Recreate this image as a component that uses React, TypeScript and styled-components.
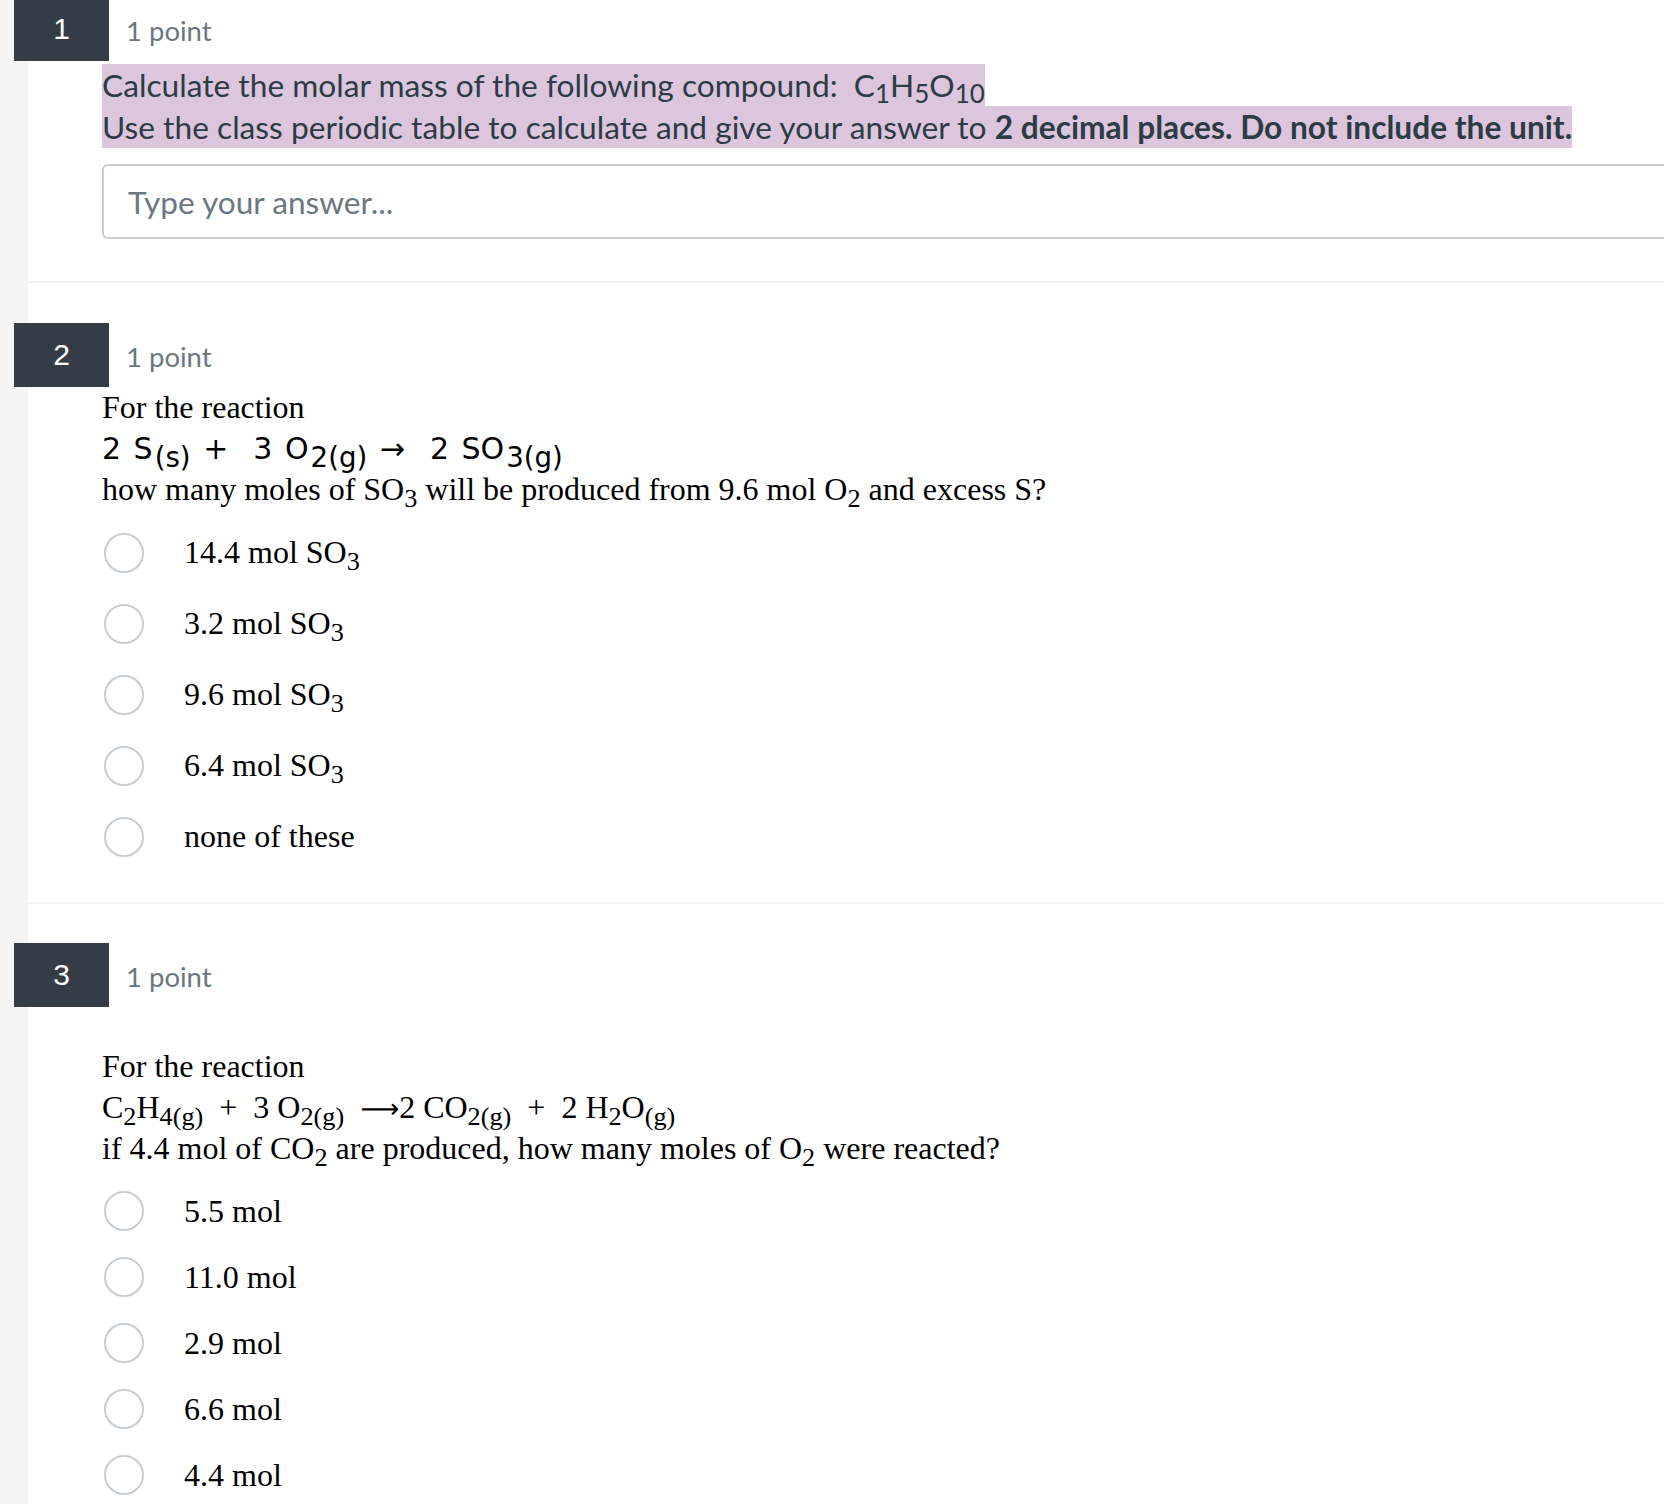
import styled, { createGlobalStyle } from "styled-components";

const GlobalStyle = createGlobalStyle`
  body {
    margin: 0;
    background: #fff;
    font-family: Lato, "Noto Sans", sans-serif;
  }
`;

const q2Options = ["14.4", "3.2", "9.6", "6.4"];
const q3Options = ["5.5 mol", "11.0 mol", "2.9 mol", "6.6 mol", "4.4 mol"];

const App = () => {
  return (
    <Page>
      <GlobalStyle />
      <Rail />
      <Main>
        <Question $top={-3} $bottom={42}>
          <Header>
            <Badge>1</Badge>
            <Points>1 point</Points>
          </Header>
          <Body>
            <Prompt>
              <Highlight>
                Calculate the molar mass of the following compound:&nbsp; C
                <Sub>1</Sub>H<Sub>5</Sub>O<Sub>10</Sub>
              </Highlight>
              <Highlight>
                Use the class periodic table to calculate and give your answer to{" "}
                <b>2 decimal places. Do not include the unit.</b>
              </Highlight>
            </Prompt>
            <Answer placeholder="Type your answer..." />
          </Body>
        </Question>

        <Question $top={40} $bottom={30}>
          <Header>
            <Badge>2</Badge>
            <Points>1 point</Points>
          </Header>
          <Body>
            <Serif>
              <div>For the reaction</div>
              <Equation>
                2 S<ESub>(s)</ESub> +&nbsp; 3 O<ESub>2(g)</ESub> &rarr;&nbsp; 2 SO
                <ESub>3(g)</ESub>
              </Equation>
              <div>
                how many moles of SO<Sub>3</Sub> will be produced from 9.6 mol O
                <Sub>2</Sub> and excess S?
              </div>
            </Serif>
            <Options $row={71} $gap={7}>
              {q2Options.map((o) => (
                <Option key={o}>
                  <Radio />
                  <Label>
                    {o} mol SO<Sub>3</Sub>
                  </Label>
                </Option>
              ))}
              <Option>
                <Radio />
                <Label>none of these</Label>
              </Option>
            </Options>
          </Body>
        </Question>

        <Question $top={39} $bottom={40}>
          <Header>
            <Badge>3</Badge>
            <Points>1 point</Points>
          </Header>
          <Body>
            <Serif>
              <Blank />
              <div>For the reaction</div>
              <div>
                C<Sub>2</Sub>H<Sub>4(g)</Sub>&nbsp; +&nbsp; 3 O<Sub>2(g)</Sub>
                &nbsp; <Arrow>&#10230;</Arrow>2 CO<Sub>2(g)</Sub>&nbsp; +&nbsp; 2 H
                <Sub>2</Sub>O<Sub>(g)</Sub>
              </div>
              <div>
                if 4.4 mol of CO<Sub>2</Sub> are produced, how many moles of O
                <Sub>2</Sub> were reacted?
              </div>
            </Serif>
            <Options $row={66} $gap={9}>
              {q3Options.map((o) => (
                <Option key={o}>
                  <Radio />
                  <Label>{o}</Label>
                </Option>
              ))}
            </Options>
          </Body>
        </Question>
      </Main>
    </Page>
  );
};

export default App;

const Page = styled.div`
  display: flex;
  min-height: 1504px;
  overflow: hidden;
`;

const Rail = styled.div`
  width: 28px;
  flex: none;
  background-color: #f5f5f5;
`;

const Main = styled.div`
  flex: 1;
  min-width: 0;
`;

const Question = styled.section<{ $top: number; $bottom: number }>`
  padding: 0 0 ${(p) => p.$bottom}px;
  margin-top: ${(p) => (p.$top < 0 ? p.$top : 0)}px;
  padding-top: ${(p) => (p.$top > 0 ? p.$top : 0)}px;
  border-bottom: 2px solid #f2f3f4;
`;

const Header = styled.div`
  display: flex;
  align-items: center;
  height: 64px;
`;

const Badge = styled.div`
  width: 95px;
  height: 64px;
  margin-left: -14px;
  background-color: #343d46;
  color: #fff;
  display: flex;
  justify-content: center;
  align-items: center;
  font-family: "Liberation Sans", Arial, sans-serif;
  font-size: 30px;
`;

const Points = styled.span`
  margin-left: 17px;
  padding-top: 2px;
  font-size: 27.5px;
  color: #6b7780;
`;

const Body = styled.div`
  padding-left: 74px;
`;

const Prompt = styled.div`
  margin-top: 3px;
  color: #2d3b45;
  font-size: 31.7px;
  line-height: 42px;

  b {
    font-weight: 700;
  }
`;

const Highlight = styled.div`
  width: fit-content;
  background-color: #dcc6dd;
`;

const Sub = styled.sub`
  font-size: 0.82em;
  line-height: 0;
  vertical-align: -0.25em;
`;

const Answer = styled.input`
  display: block;
  box-sizing: border-box;
  width: calc(100% + 20px);
  height: 75px;
  margin-top: 16px;
  padding: 0 24px;
  border: 2px solid #c7cdd1;
  border-radius: 6px;
  font-family: Lato, sans-serif;
  font-size: 31.6px;
  color: #2d3b45;
  outline: none;

  &::placeholder {
    color: #6b7780;
  }
`;

const Serif = styled.div`
  font-family: "Liberation Serif", "Times New Roman", serif;
  font-size: 32px;
  line-height: 41px;
  color: #000;
`;

const Blank = styled.div`
  height: 39px;
`;

const Equation = styled.div`
  font-family: "DejaVu Sans", Verdana, sans-serif;
  font-size: 30px;
  line-height: 41px;
  word-spacing: 3px;
`;

const ESub = styled.sub`
  font-size: 0.92em;
  line-height: 0;
  margin-left: 2px;
  vertical-align: -0.3em;
`;

const Arrow = styled.span`
  font-family: "DejaVu Sans", sans-serif;
  font-size: 0.85em;
  line-height: 0;
`;

const Options = styled.div<{ $row: number; $gap: number }>`
  display: flex;
  flex-direction: column;
  margin-top: ${(p) => p.$gap}px;

  & > div {
    height: ${(p) => p.$row}px;
  }
`;

const Option = styled.div`
  display: flex;
  align-items: center;
`;

const Radio = styled.span`
  box-sizing: border-box;
  width: 40px;
  height: 40px;
  margin-left: 2px;
  border: 2px solid #c7cdd1;
  border-radius: 50%;
  flex: none;
`;

const Label = styled.span`
  margin-left: 40px;
  font-family: "Liberation Serif", "Times New Roman", serif;
  font-size: 32px;
  color: #000;
`;
